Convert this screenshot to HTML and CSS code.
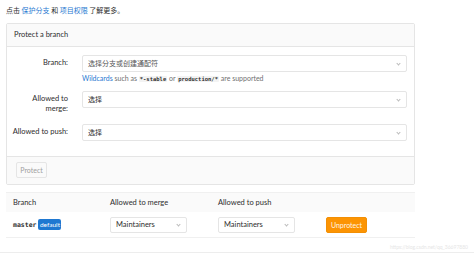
FILE: index.html
```html
<!DOCTYPE html>
<html>
<head>
<meta charset="utf-8">
<link rel="stylesheet" href="styles.css">
</head>
<body>
<p class="intro">点击 <a class="link">保护分支</a> 和 <a class="link">项目权限</a> 了解更多。</p>

<div class="panel">
  <div class="panel-head">Protect a branch</div>
  <div class="panel-body">
    <div class="row row-branch">
      <label class="lbl">Branch:</label>
      <div class="field">
        <div class="select"><span class="ph">选择分支或创建通配符</span><span class="chev"></span></div>
        <div class="hint"><a class="link">Wildcards</a> such as <code>*-stable</code> or <code>production/*</code> are supported</div>
      </div>
    </div>
    <div class="row">
      <label class="lbl">Allowed to<br>merge:</label>
      <div class="field">
        <div class="select"><span>选择</span><span class="chev"></span></div>
      </div>
    </div>
    <div class="row">
      <label class="lbl">Allowed to push:</label>
      <div class="field">
        <div class="select"><span>选择</span><span class="chev"></span></div>
      </div>
    </div>
  </div>
  <div class="panel-foot">
    <button class="btn-protect">Protect</button>
  </div>
</div>

<div class="table">
  <div class="thead">
    <div class="cell">Branch</div>
    <div class="cell">Allowed to merge</div>
    <div class="cell">Allowed to push</div>
    <div class="cell"></div>
  </div>
  <div class="trow">
    <div class="cell"><span class="mono">master</span><span class="badge">default</span></div>
    <div class="cell"><div class="select small"><span>Maintainers</span><span class="chev"></span></div></div>
    <div class="cell"><div class="select small"><span>Maintainers</span><span class="chev"></span></div></div>
    <div class="cell"><button class="btn-unprotect">Unprotect</button></div>
  </div>
</div>

<div class="bottom">
  <span class="watermark">https://blog.csdn.net/qq_36697880</span>
</div>
</body>
</html>
```

FILE: styles.css
```css
* { box-sizing: border-box; }
html, body { margin: 0; padding: 0; background: #fff; }
body {
  font-family: Lato, "Noto Sans", "Noto Sans CJK SC", sans-serif;
  font-size: 7.5px;
  color: #2e2e2e;
  width: 474px;
  height: 256px;
  overflow: hidden;
}
.intro {
  margin: 0;
  padding: 6px 0 0 6px;
  height: 23px;
  line-height: 9px;
  font-family: "Noto Sans CJK SC", sans-serif;
  font-size: 7px;
  color: #2e2e2e;
}
.link { color: #1f78d1; text-decoration: none; }

.panel {
  margin-left: 6px;
  width: 409px;
  border: 1px solid #e5e5e5;
  border-radius: 2px;
}
.panel-head {
  height: 23px;
  line-height: 22px;
  padding-left: 7px;
  background: #fafafa;
  border-bottom: 1px solid #e5e5e5;
  font-size: 7.5px;
}
.panel-body {
  padding: 8px 7px 8px 1px;
}
.row {
  display: flex;
  gap: 14px;
  margin-bottom: 8px;
}
.row:last-child { margin-bottom: 7px; }
.row-branch { margin-bottom: 8px; }
.lbl {
  width: 60px;
  flex: none;
  text-align: right;
  padding-top: 3px;
  padding-bottom: 2px;
  line-height: 10px;
  font-size: 7.5px;
  color: #2e2e2e;
  white-space: nowrap;
}
.field { flex: 1; }
.select {
  position: relative;
  height: 17px;
  border: 1px solid #e5e5e5;
  border-radius: 2px;
  background: #fff;
  padding-left: 5px;
  line-height: 15px;
  font-size: 7px;
  color: #2e2e2e;
  font-family: "Noto Sans CJK SC", sans-serif;
}
.select .ph { color: #555; }
.chev {
  position: absolute;
  right: 6px;
  top: 6px;
  width: 3px;
  height: 3px;
  border-right: 1px solid #bbb;
  border-bottom: 1px solid #bbb;
  transform: rotate(45deg);
}
.hint {
  margin-top: 2px;
  line-height: 8px;
  font-size: 7px;
  color: #707070;
}
code {
  font-family: "DejaVu Sans Mono", monospace;
  font-size: 5.5px;
  font-weight: bold;
  background: #f3f3f3;
  color: #2e2e2e;
  padding: 0 1px;
  border-radius: 1px;
}
.panel-foot {
  height: 28px;
  background: #fafafa;
  border-top: 1px solid #e5e5e5;
  padding: 5px 0 0 9px;
}
.btn-protect {
  display: block;
  width: 31px;
  height: 16px;
  padding: 0;
  border: 1px solid #e5e5e5;
  border-radius: 2px;
  background: #fafafa;
  color: #a0a0a0;
  font-family: Lato, sans-serif;
  font-size: 7px;
}

.table {
  margin: 7px 0 0 6px;
  width: 409px;
}
.thead, .trow {
  display: grid;
  grid-template-columns: 97px 108px 108px 1fr;
  align-items: center;
}
.thead {
  height: 20px;
  background: #fafafa;
  border-top: 1px solid #f0f0f0;
  font-size: 7.5px;
  color: #2e2e2e;
}
.trow {
  height: 26px;
  border-bottom: 1px solid #f0f0f0;
}
.cell {
  padding: 0 7px;
  display: flex;
  align-items: center;
}
.mono {
  font-family: "DejaVu Sans Mono", monospace;
  font-size: 6.5px;
  font-weight: bold;
  color: #2e2e2e;
}
.badge {
  margin-left: 2px;
  height: 11px;
  width: 23px;
  background: #1f78d1;
  color: #fff;
  border-radius: 2px;
  font-size: 6.5px;
  line-height: 11px;
  text-align: center;
}
.select.small {
  width: 77px;
  height: 16px;
  line-height: 14px;
  font-family: Lato, sans-serif;
  font-size: 7.5px;
  padding-left: 5px;
}
.select.small .chev { top: 5px; }
.btn-unprotect {
  width: 41px;
  height: 16px;
  padding: 0;
  border: 1px solid #f28f05;
  border-radius: 2px;
  background: #fc9403;
  color: #fff5e6;
  font-family: Lato, sans-serif;
  font-size: 7px;
}
.bottom {
  height: 15px;
  padding-top: 5px;
  border-bottom: 1px solid #ededed;
  text-align: right;
  padding-right: 6px;
}
.watermark {
  display: block;
  font-size: 5px;
  color: #e6e6e6;
  line-height: 9px;
}
```
